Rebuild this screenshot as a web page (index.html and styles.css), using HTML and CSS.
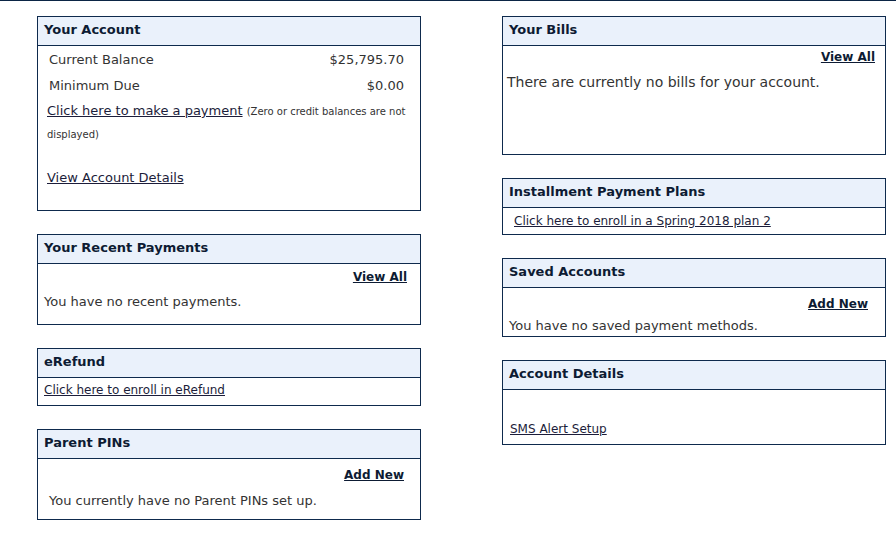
FILE: index.html
```html
<!DOCTYPE html>
<html>
<head>
<meta charset="utf-8">
<title>Account</title>
<link rel="stylesheet" href="styles.css">
</head>
<body>
<div class="topline"></div>
<div class="page">
  <div class="col">
    <section class="box">
      <h2 class="box-title">Your Account</h2>
      <div class="box-body acct">
        <div class="row"><span>Current Balance</span><span>$25,795.70</span></div>
        <div class="row"><span>Minimum Due</span><span>$0.00</span></div>
        <p class="pay"><a href="#" class="lnk">Click here to make a payment</a> <small class="note">(Zero or credit balances are not displayed)</small></p>
        <p class="details"><a href="#" class="lnk">View Account Details</a></p>
      </div>
    </section>
    <section class="box">
      <h2 class="box-title">Your Recent Payments</h2>
      <div class="box-body recent">
        <div class="action"><a href="#" class="strong">View All</a></div>
        <p class="msg">You have no recent payments.</p>
      </div>
    </section>
    <section class="box">
      <h2 class="box-title">eRefund</h2>
      <div class="box-body erefund">
        <a href="#" class="lnk">Click here to enroll in eRefund</a>
      </div>
    </section>
    <section class="box">
      <h2 class="box-title">Parent PINs</h2>
      <div class="box-body pins">
        <div class="action"><a href="#" class="strong">Add New</a></div>
        <p class="msg">You currently have no Parent PINs set up.</p>
      </div>
    </section>
  </div>
  <div class="col">
    <section class="box">
      <h2 class="box-title">Your Bills</h2>
      <div class="box-body bills">
        <div class="action"><a href="#" class="strong">View All</a></div>
        <p class="msg">There are currently no bills for your account.</p>
      </div>
    </section>
    <section class="box">
      <h2 class="box-title">Installment Payment Plans</h2>
      <div class="box-body plans">
        <a href="#" class="lnk">Click here to enroll in a Spring 2018 plan 2</a>
      </div>
    </section>
    <section class="box">
      <h2 class="box-title">Saved Accounts</h2>
      <div class="box-body saved">
        <div class="action"><a href="#" class="strong">Add New</a></div>
        <p class="msg">You have no saved payment methods.</p>
      </div>
    </section>
    <section class="box">
      <h2 class="box-title">Account Details</h2>
      <div class="box-body adetails">
        <a href="#" class="lnk">SMS Alert Setup</a>
      </div>
    </section>
  </div>
</div>
</body>
</html>
```

FILE: styles.css
```css
html, body {
  margin: 0;
  padding: 0;
  background: #ffffff;
}
body {
  font-family: "DejaVu Sans", Verdana, sans-serif;
  font-size: 13px;
  color: #333333;
}
.topline {
  height: 1px;
  background: #0b2545;
}
.page {
  display: flex;
  gap: 81px;
  padding: 15px 0 0 37px;
}
.col {
  width: 384px;
  display: flex;
  flex-direction: column;
  gap: 23px;
}
.box {
  border: 1px solid #0e2a4d;
  background: #ffffff;
}
.box-title {
  margin: 0;
  height: 29px;
  line-height: 26px;
  padding: 0 6px 2px;
  box-sizing: border-box;
  font-size: 13px;
  font-weight: bold;
  color: #0d1b33;
  background: #eaf1fb;
  border-bottom: 1px solid #0e2a4d;
}
.box-body { box-sizing: border-box; }
.box-body p { margin: 0; }
.lnk {
  color: #1c1d3a;
  text-decoration: underline;
}
.strong {
  color: #0d1b33;
  font-size: 12px;
  font-weight: bold;
  text-decoration: underline;
}
.action { text-align: right; }

/* Your Account */
.acct {
  height: 164px;
  padding: 1px 9px 0;
}
.row {
  display: flex;
  justify-content: space-between;
  height: 26px;
  line-height: 26px;
  padding: 0 7px 0 2px;
}
.pay { line-height: 23px; }
.note { font-size: 10px; line-height: 1; color: #333; }
.details { margin-top: 21px !important; line-height: 23px; }

/* Recent payments */
.recent { height: 60px; padding: 1px 13px 0 6px; }
.recent .action { line-height: 24px; }
.recent .msg { line-height: 26px; }

/* eRefund */
.erefund { height: 27px; line-height: 22px; padding: 1px 6px 0; font-size: 12px; }

/* Parent PINs */
.pins { height: 60px; padding: 4px 16px 0 11px; }
.pins .action { line-height: 24px; }
.pins .msg { line-height: 27px; }

/* Bills */
.bills { height: 108px; padding: 1px 10px 0 4px; }
.bills .action { line-height: 20px; }
.bills .msg { margin-top: 3px; line-height: 24px; font-size: 14px; }

/* Plans */
.plans { height: 26px; line-height: 24px; padding: 1px 11px 0; font-size: 12px; }

/* Saved */
.saved { height: 48px; padding: 4px 17px 0 6px; }
.saved .action { line-height: 24px; }
.saved .msg { line-height: 20px; }

/* Account details */
.adetails { height: 54px; padding: 28px 7px 0; line-height: 22px; font-size: 12px; }
```
